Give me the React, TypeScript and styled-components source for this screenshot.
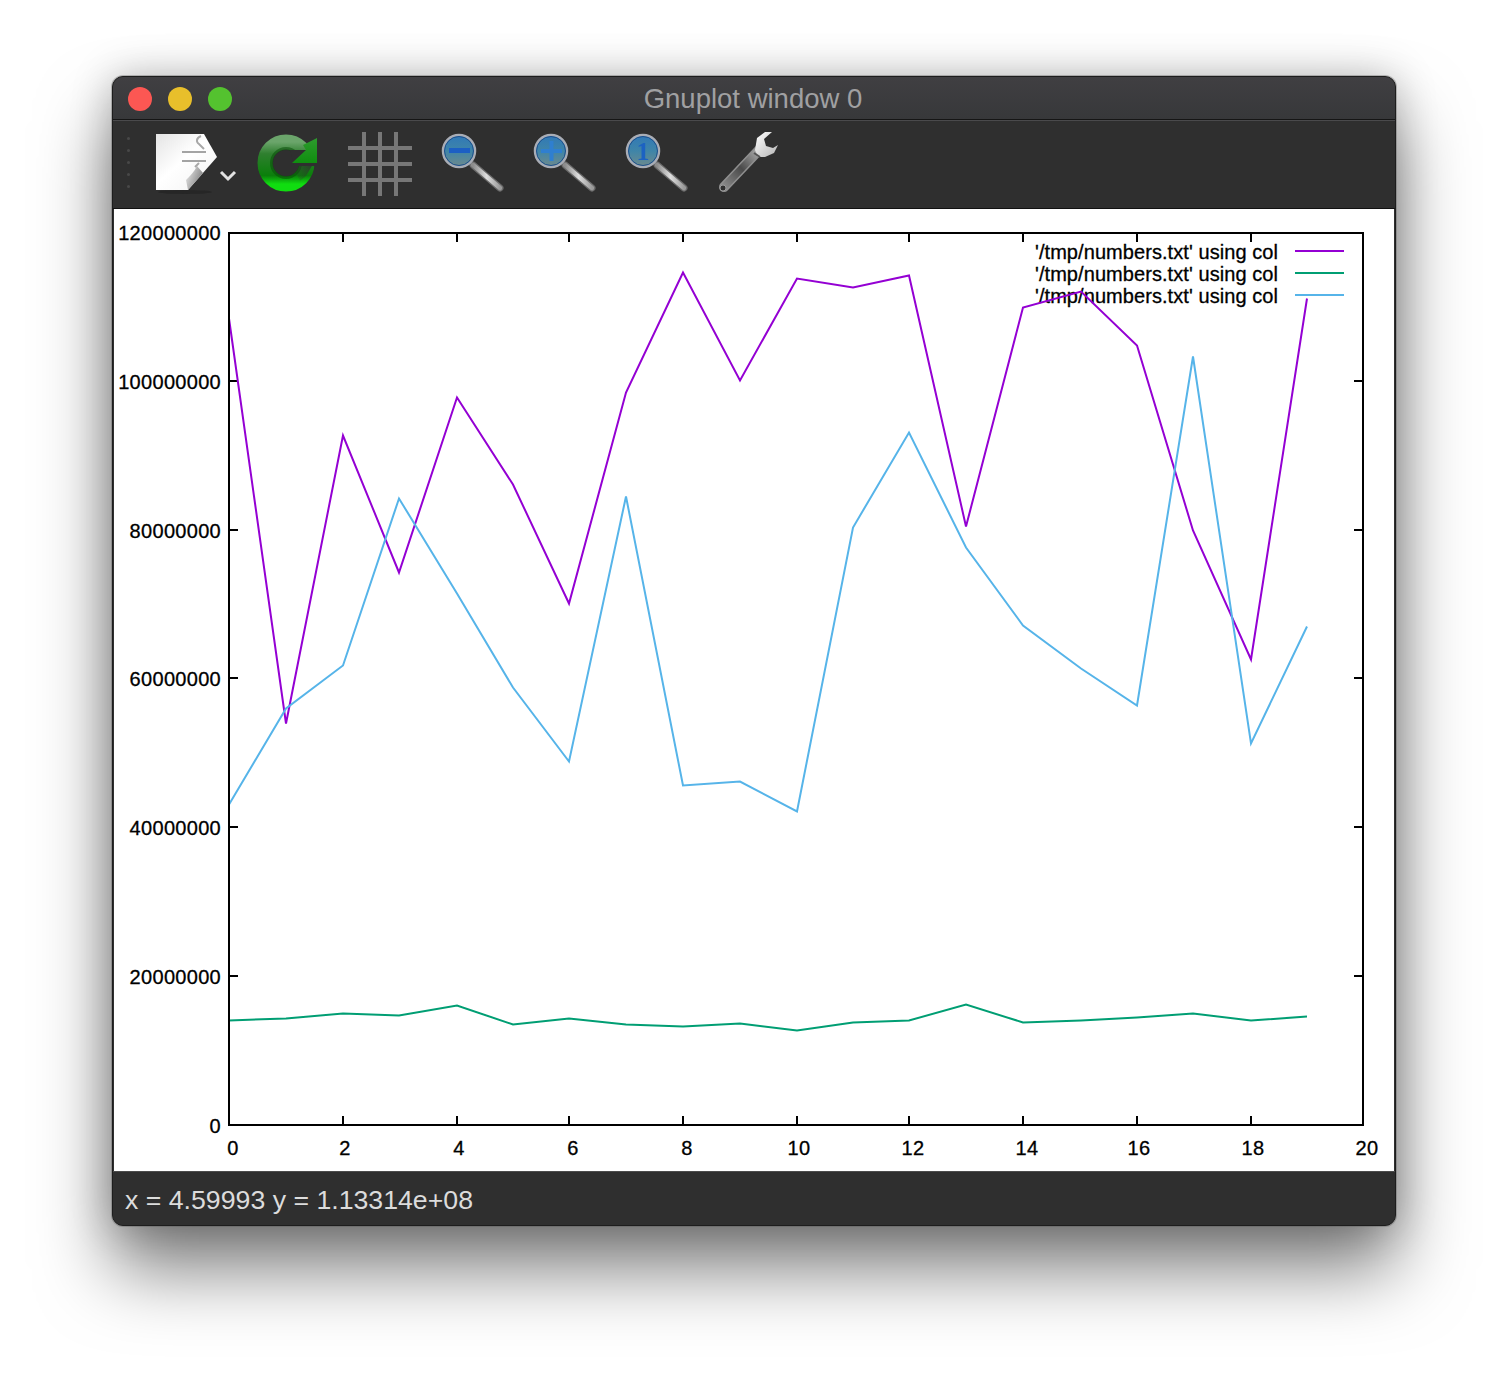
import React from 'react';
import styled, { createGlobalStyle } from 'styled-components';

const GlobalStyle = createGlobalStyle`
  html, body {
    margin: 0;
    padding: 0;
    background: #ffffff;
  }
`;

const Page = styled.div`
  box-sizing: border-box;
  width: 1508px;
  height: 1374px;
  padding: 76px 112px 148px;
  overflow: hidden;
  background: #ffffff;
`;

const Window = styled.div`
  box-sizing: border-box;
  width: 1284px;
  height: 1150px;
  display: flex;
  flex-direction: column;
  overflow: hidden;
  border: 1px solid #1d1d1d;
  border-radius: 11px;
  background: #2f2f2f;
  box-shadow:
    0 0 0 1px rgba(90, 90, 90, 0.35),
    0 44px 72px rgba(0, 0, 0, 0.5),
    0 0 42px rgba(0, 0, 0, 0.24);
`;

const TitleBar = styled.div`
  position: relative;
  box-sizing: border-box;
  flex: 0 0 43px;
  display: flex;
  align-items: center;
  justify-content: center;
  border-bottom: 1px solid #151515;
  background: linear-gradient(#403f42, #37383a);
`;

const Lights = styled.div`
  position: absolute;
  top: 10px;
  left: 15px;
  display: flex;
  gap: 16px;
`;

const Light = styled.span<{ $color: string }>`
  width: 24px;
  height: 24px;
  border-radius: 50%;
  background: ${(props) => props.$color};
`;

const Title = styled.div`
  font-family: 'Liberation Sans', Arial, sans-serif;
  font-size: 27.5px;
  color: #a0a0a2;
  margin: 1px 2px 0 0;
`;

const Toolbar = styled.div`
  box-sizing: border-box;
  flex: 0 0 89px;
  display: flex;
  align-items: flex-start;
  padding-top: 9px;
  border-top: 1px solid #4a4a4c;
  border-bottom: 1px solid #111111;
  background: #2f2f2f;
`;

const Grip = styled.div`
  flex: 0 0 auto;
  display: flex;
  flex-direction: column;
  gap: 9px;
  margin: 7px 0 0 14px;
`;

const GripDot = styled.span`
  width: 3px;
  height: 3px;
  border-radius: 50%;
  background: #484848;
`;

const ToolGroup = styled.div`
  display: flex;
  margin-left: 22px;
`;

const ToolButton = styled.button<{ $width: number }>`
  all: unset;
  width: ${(props) => props.$width}px;
  height: 66px;
  display: flex;
  justify-content: center;

  svg {
    display: block;
    filter: blur(0.35px);
  }
`;

const PlotArea = styled.div`
  flex: 1 1 auto;
  margin: 0 1px;
  background: #ffffff;

  svg {
    display: block;
  }
`;

const AxisLabel = styled.text`
  font-family: 'Liberation Sans', Arial, sans-serif;
  font-size: 20px;
  letter-spacing: 0.3px;
  fill: #000000;
  stroke: #000000;
  stroke-width: 0.3px;
`;

const LegendLabel = styled(AxisLabel)`
  letter-spacing: 0.07px;
`;

const StatusBar = styled.div`
  flex: 0 0 54px;
  box-sizing: border-box;
  display: flex;
  align-items: center;
  padding: 3px 12px 0;
  border-top: 1px solid #4c4c4c;
  background: #2f2f2f;
  font-family: 'Liberation Sans', Arial, sans-serif;
  font-size: 26.7px;
  color: #dcdcdc;
`;

const xPoints = [229, 286, 343, 399, 457, 513, 569, 626, 683, 740, 797, 853, 909, 966, 1023, 1081, 1137, 1193, 1251, 1307];

const series = [
  {
    color: '#9400d3',
    y: [318, 723, 435, 572, 397, 484, 603, 392, 272, 380, 278, 287, 275, 526, 307, 291, 345, 530, 659, 298],
  },
  {
    color: '#009e73',
    y: [1020, 1018, 1013, 1015, 1005, 1024, 1018, 1024, 1026, 1023, 1030, 1022, 1020, 1004, 1022, 1020, 1017, 1013, 1020, 1016],
  },
  {
    color: '#56b4e9',
    y: [804, 708, 665, 498, 593, 687, 761, 496, 785, 781, 811, 527, 432, 547, 625, 668, 705, 356, 743, 626],
  },
];

const yTicks = [
  { y: 233, ly: 239.5, label: '120000000' },
  { y: 381, ly: 388.5, label: '100000000' },
  { y: 530, ly: 537.5, label: '80000000' },
  { y: 678, ly: 685.5, label: '60000000' },
  { y: 827, ly: 834.5, label: '40000000' },
  { y: 976, ly: 983.5, label: '20000000' },
  { y: 1125, ly: 1132.5, label: '0' },
];

const xTicks = [
  { x: 229, lx: 233, label: '0' },
  { x: 343, lx: 345, label: '2' },
  { x: 457, lx: 459, label: '4' },
  { x: 569, lx: 573, label: '6' },
  { x: 683, lx: 687, label: '8' },
  { x: 797, lx: 799, label: '10' },
  { x: 909, lx: 913, label: '12' },
  { x: 1023, lx: 1027, label: '14' },
  { x: 1137, lx: 1139, label: '16' },
  { x: 1251, lx: 1253, label: '18' },
  { x: 1363, lx: 1367, label: '20' },
];

const legendRows = [
  { y: 251, color: '#9400d3' },
  { y: 273, color: '#009e73' },
  { y: 295, color: '#56b4e9' },
];

function SaveIcon() {
  return (
    <svg width="84" height="66" viewBox="0 0 84 66">
      <defs>
        <linearGradient id="pageFill" x1="0" y1="0" x2="1" y2="1">
          <stop offset="0" stopColor="#e4e4e4" />
          <stop offset="0.45" stopColor="#ffffff" />
          <stop offset="1" stopColor="#f2f2f2" />
        </linearGradient>
        <linearGradient id="foldFill" x1="0" y1="0" x2="1" y2="0.6">
          <stop offset="0" stopColor="#f4f4f4" />
          <stop offset="1" stopColor="#7c7c7c" />
        </linearGradient>
      </defs>
      <ellipse cx="30" cy="62" rx="27" ry="2" fill="#262626" />
      <path d="M1 4H49L62 27L33 60H1Z" fill="url(#pageFill)" />
      <path d="M33 60L31 50C35 46 39 42 42 36L48 43Z" fill="url(#foldFill)" />
      <path d="M46 6C41 8 41 12 44 14L49 19M44 33L40 37" fill="none" stroke="#a8a8a8" strokeWidth="2" />
      <path d="M27 22H51M27 31H51" stroke="#a4a4a4" strokeWidth="2" />
      <polyline points="66,42 73,49 80,42" fill="none" stroke="#e2e2e2" strokeWidth="3" />
    </svg>
  );
}

function ReloadIcon() {
  return (
    <svg width="64" height="66" viewBox="256 130 64 66">
      <defs>
        <linearGradient id="ringFill" x1="0" y1="0" x2="0" y2="1">
          <stop offset="0" stopColor="#6ba56b" />
          <stop offset="0.28" stopColor="#2f7f2f" />
          <stop offset="0.8" stopColor="#0a7f0a" />
          <stop offset="1" stopColor="#10dd10" />
        </linearGradient>
        <linearGradient id="ringFade" x1="0" y1="1" x2="1" y2="0">
          <stop offset="0" stopColor="#2f2f2f" stopOpacity="0" />
          <stop offset="1" stopColor="#2f2f2f" />
        </linearGradient>
        <linearGradient id="arrowFill" x1="0" y1="0" x2="0" y2="1">
          <stop offset="0" stopColor="#2e9a2e" />
          <stop offset="1" stopColor="#0f8f0f" />
        </linearGradient>
      </defs>
      <circle cx="286" cy="163" r="21" fill="none" stroke="url(#ringFill)" strokeWidth="15" />
      <circle cx="286" cy="163" r="14.500" fill="none" stroke="#0a4f0a" strokeOpacity="0.55" strokeWidth="3" />
      <path d="M290 150H318V166H294Z" fill="#2f2f2f" />
      <path d="M300 181L306 176L313 164L304 159L296 173Z" fill="url(#ringFade)" />
      <path d="M292 163L306 150L303 145L317 138V163Z" fill="url(#arrowFill)" />
    </svg>
  );
}

function GridIcon() {
  return (
    <svg width="64" height="66" viewBox="348 130 64 66">
      <path d="M364 132V196M380 132V196M396 132V196M348 148H412M348 164H412M348 180H412" stroke="#777777" strokeWidth="4" fill="none" />
    </svg>
  );
}

function Magnifier({ id, children }: { id: string; children?: React.ReactNode }) {
  return (
    <svg width="64" height="66" viewBox="440 130 64 66">
      <defs>
        <linearGradient id={`lens-${id}`} x1="0" y1="0" x2="0" y2="1">
          <stop offset="0" stopColor="#2f78b8" />
          <stop offset="0.5" stopColor="#3f85a8" />
          <stop offset="1" stopColor="#6e8a8c" />
        </linearGradient>
        <linearGradient id={`handle-${id}`} x1="0" y1="0" x2="1" y2="0">
          <stop offset="0" stopColor="#8c8c8c" />
          <stop offset="0.5" stopColor="#dedede" />
          <stop offset="1" stopColor="#9a9a9a" />
        </linearGradient>
      </defs>
      <path d="M473 165L500 188" stroke="#6a6a6a" strokeWidth="7" strokeLinecap="round" />
      <path d="M473 165L500 188" stroke={`url(#handle-${id})`} strokeWidth="4.5" strokeLinecap="round" />
      <circle cx="459" cy="151" r="16" fill={`url(#lens-${id})`} stroke="#a9adb6" strokeWidth="2.500" />
      <circle cx="459" cy="151" r="14.500" fill="none" stroke="#1d4f8c" strokeWidth="1" />
      {children}
    </svg>
  );
}

const LensDigit = styled.text`
  font-family: 'Liberation Serif', 'Times New Roman', serif;
  font-size: 26px;
  font-weight: 700;
  fill: #1c62c2;
`;

function WrenchIcon() {
  return (
    <svg width="64" height="66" viewBox="716 130 64 66">
      <defs>
        <linearGradient id="wrenchHandle" x1="0" y1="1" x2="1" y2="0">
          <stop offset="0" stopColor="#8a8a8a" />
          <stop offset="0.5" stopColor="#4a4a4a" />
          <stop offset="1" stopColor="#b0b0b0" />
        </linearGradient>
        <linearGradient id="wrenchHead" x1="0" y1="0" x2="1" y2="1">
          <stop offset="0" stopColor="#ffffff" />
          <stop offset="1" stopColor="#b5b5b5" />
        </linearGradient>
      </defs>
      <path d="M724 187L759 150" stroke="#8f8f8f" strokeWidth="10" strokeLinecap="round" />
      <path d="M724 187L759 150" stroke="url(#wrenchHandle)" strokeWidth="7" strokeLinecap="round" />
      <circle cx="723" cy="188" r="3" fill="#2f2f2f" stroke="#9a9a9a" strokeWidth="1" />
      <path d="M755 150L757 138L765 132L772 132L764 139L766 146L773 148L778 145L774 153L765 157L758 157Z" fill="url(#wrenchHead)" />
      <path d="M754 153L760 157" stroke="#555555" strokeWidth="2" />
    </svg>
  );
}

function Plot() {
  return (
    <svg width="1280" height="962" viewBox="114 209 1280 962">
      <path
        d={[
          ...xTicks.slice(1, -1).map((t) => `M${t.x} 233V242M${t.x} 1125V1116`),
          ...yTicks.slice(1, -1).map((t) => `M229 ${t.y}H238M1363 ${t.y}H1354`),
        ].join('')}
        stroke="#000000"
        strokeWidth="2"
        fill="none"
      />
      {yTicks.map((t) => (
        <AxisLabel key={t.label} x="221" y={t.ly} textAnchor="end">
          {t.label}
        </AxisLabel>
      ))}
      {xTicks.map((t) => (
        <AxisLabel key={t.label} x={t.lx} y="1155" textAnchor="middle">
          {t.label}
        </AxisLabel>
      ))}
      {legendRows.map((row) => (
        <React.Fragment key={row.y}>
          <LegendLabel x="1035" y={row.y + 7.5}>
            '/tmp/numbers.txt' using col
          </LegendLabel>
          <line x1="1295" x2="1344" y1={row.y} y2={row.y} stroke={row.color} strokeWidth="2" />
        </React.Fragment>
      ))}
      {series.map((s) => (
        <polyline
          key={s.color}
          points={s.y.map((y, i) => `${xPoints[i]},${y + 0.5}`).join(' ')}
          fill="none"
          stroke={s.color}
          strokeWidth="2"
        />
      ))}
      <rect x="229" y="233" width="1134" height="892" fill="none" stroke="#000000" strokeWidth="2" />
    </svg>
  );
}

export default function App() {
  return (
    <Page>
      <GlobalStyle />
      <Window>
        <TitleBar>
          <Lights>
            <Light $color="#fc5753" />
            <Light $color="#e8bf2b" />
            <Light $color="#54c22f" />
          </Lights>
          <Title>Gnuplot window 0</Title>
        </TitleBar>
        <Toolbar>
          <Grip>
            <GripDot />
            <GripDot />
            <GripDot />
            <GripDot />
            <GripDot />
          </Grip>
          <ToolGroup>
            <ToolButton $width={90}>
              <SaveIcon />
            </ToolButton>
            <ToolButton $width={92}>
              <ReloadIcon />
            </ToolButton>
            <ToolButton $width={92}>
              <GridIcon />
            </ToolButton>
            <ToolButton $width={92}>
              <Magnifier id="out">
                <rect x="449" y="148" width="21" height="5" fill="#1c5fc4" />
              </Magnifier>
            </ToolButton>
            <ToolButton $width={92}>
              <Magnifier id="in">
                <path d="M449 151H470M459.500 141V161" stroke="#2f7fd0" strokeWidth="4" />
              </Magnifier>
            </ToolButton>
            <ToolButton $width={92}>
              <Magnifier id="reset">
                <LensDigit x="459" y="160" textAnchor="middle">
                  1
                </LensDigit>
              </Magnifier>
            </ToolButton>
            <ToolButton $width={92}>
              <WrenchIcon />
            </ToolButton>
          </ToolGroup>
        </Toolbar>
        <PlotArea>
          <Plot />
        </PlotArea>
        <StatusBar>x = 4.59993 y = 1.13314e+08</StatusBar>
      </Window>
    </Page>
  );
}
